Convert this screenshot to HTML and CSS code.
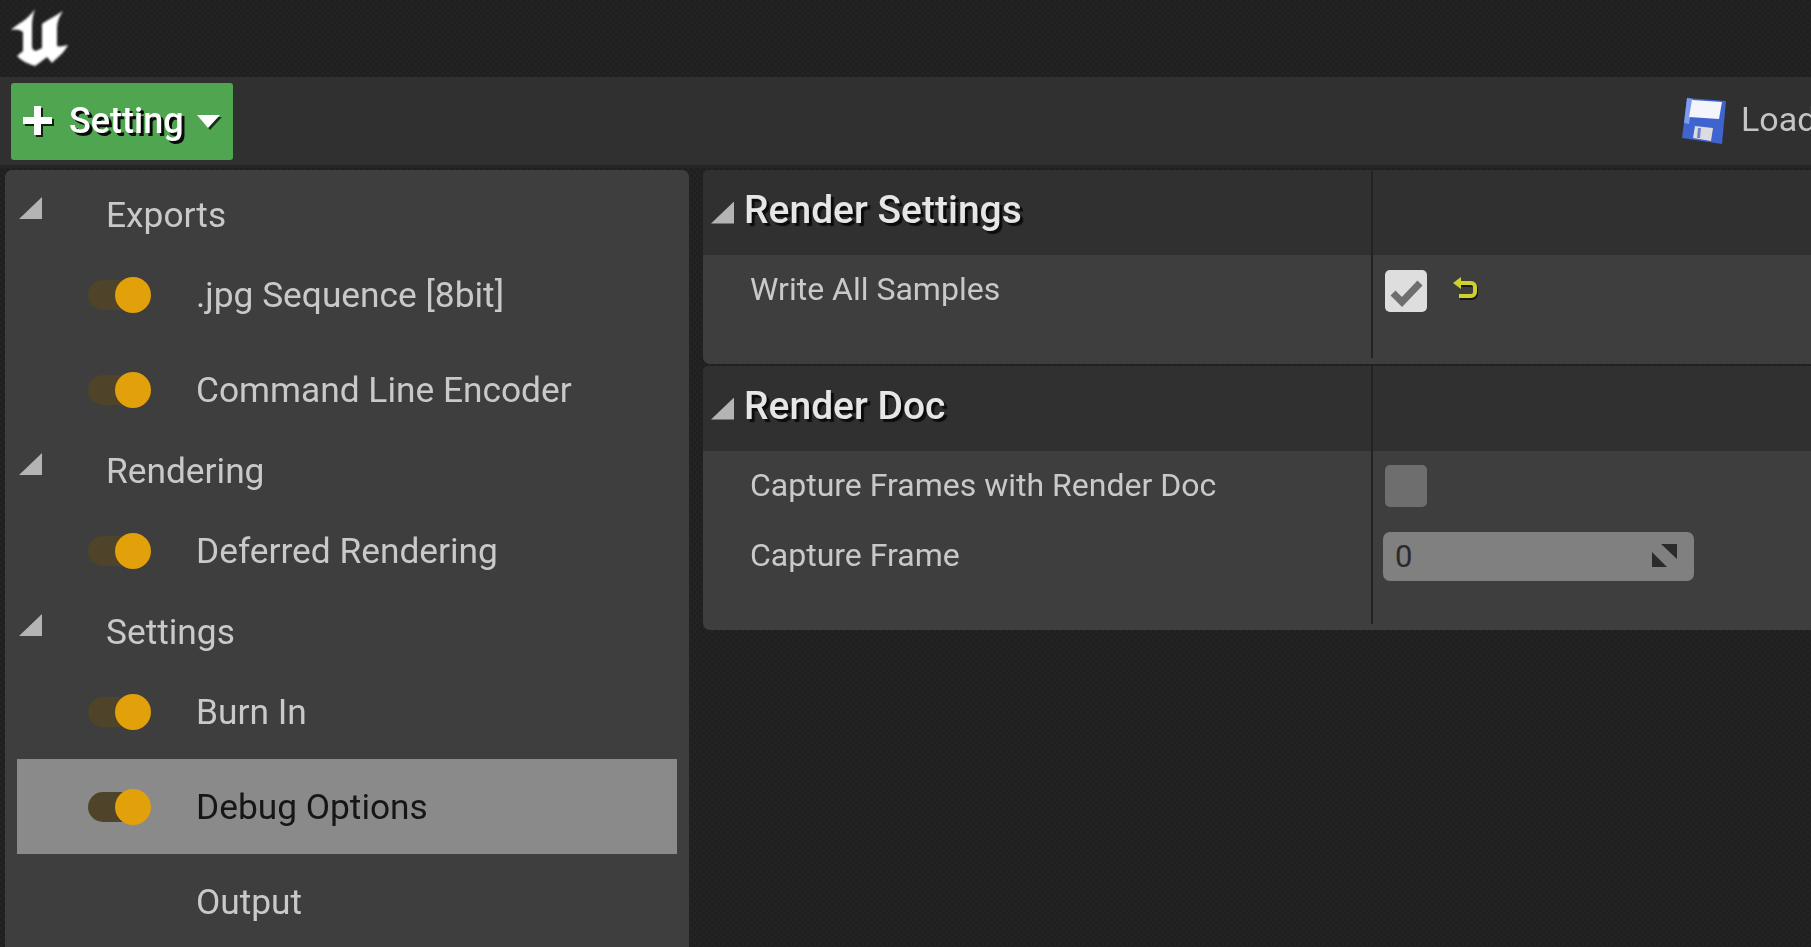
FILE: index.html
```html
<!DOCTYPE html>
<html lang="en">
<head>
<meta charset="utf-8">
<title>Movie Render Queue Settings</title>
<link rel="stylesheet" href="styles.css">
</head>
<body>
<div class="app">
  <header class="topbar">
    <svg class="logo" width="70" height="70" viewBox="0 0 70 70"><path fill="#fff" d="M11 31C17 25 28 21 35 10C33 16 32 21 32 27L32 47C32 51 35 53 38 51L42 49L42 25C47 21 54 18 63 12C59 18 57 23 57 29L57 47C60 48 63 47 68 46C64 54 58 58 52 64L47 58C42 62 38 65 35 67C28 65 22 62 17 57L23 52L23 33C19 30 15 30 11 31Z"/></svg>
  </header>
  <div class="toolbar">
    <button class="add-btn">
      <svg class="plus" width="32" height="32" viewBox="0 0 32 32"><path fill="#000" d="M14 3h7v11h11v7H21v11h-7V21H3v-7h11z" opacity=".8"/><path fill="#fff" d="M12 1h7v11h11v7H19v11h-7V19H1v-7h11z"/></svg>
      <span class="add-label">Setting</span>
      <svg class="caret" width="26" height="16" viewBox="0 0 26 16"><path fill="#000" d="M3 3h23L14 16z" opacity=".7"/><path fill="#fff" d="M1 1h23L12 14z"/></svg>
    </button>
    <div class="load">
      <svg width="46" height="46" viewBox="0 0 46 46"><path fill="#3f63cf" d="M6 0L45 3L41 46L1 40z"/><path fill="#7f9bf0" d="M6 0L12 1L8 26L3 25z"/><path fill="#f4f5fb" d="M11 2L41 4L38 21L8 19z"/><path fill="#dcdce0" d="M14 28L32 30L30 43L12 40z"/><path fill="#6f83c8" d="M17 30L20 30L19 40L16 40z"/></svg>
      <span>Load Preset</span>
    </div>
  </div>
  <div class="content">
    <nav class="sidebar">
      <div class="cat"><i class="tri"></i><span>Exports</span></div>
      <div class="item"><span class="toggle"></span><span>.jpg Sequence [8bit]</span></div>
      <div class="item"><span class="toggle"></span><span>Command Line Encoder</span></div>
      <div class="cat"><i class="tri"></i><span>Rendering</span></div>
      <div class="item"><span class="toggle"></span><span>Deferred Rendering</span></div>
      <div class="cat"><i class="tri"></i><span>Settings</span></div>
      <div class="item"><span class="toggle"></span><span>Burn In</span></div>
      <div class="item selected"><span class="toggle"></span><span>Debug Options</span></div>
      <div class="item no-toggle"><span>Output</span></div>
    </nav>
    <main class="details">
      <section class="section">
        <div class="sec-head"><i class="tri small"></i><h2>Render Settings</h2><b class="sec-div"></b></div>
        <div class="sec-body short">
          <div class="row">
            <label>Write All Samples</label>
            <div class="val first">
              <span class="check on"><svg width="42" height="42" viewBox="0 0 42 42"><path fill="none" stroke="#6e6e6e" stroke-width="7" d="M8 23l9 9L35 13"/></svg></span>
              <svg class="reset" width="26" height="24" viewBox="0 0 26 24"><path fill="none" stroke="#000" stroke-width="4" opacity=".6" d="M9 8h11a4 4 0 0 1 4 4v5a4 4 0 0 1-4 4H8"/><path fill="none" stroke="#cfcf2e" stroke-width="4" d="M8 6h11a4 4 0 0 1 4 4v5a4 4 0 0 1-4 4H7"/><path fill="#cfcf2e" d="M9 0v12L1 6z"/></svg>
            </div>
          </div>
        </div>
      </section>
      <section class="section">
        <div class="sec-head"><i class="tri small"></i><h2>Render Doc</h2><b class="sec-div"></b></div>
        <div class="sec-body">
          <div class="row">
            <label>Capture Frames with Render Doc</label>
            <div class="val"><span class="check"></span></div>
          </div>
          <div class="row">
            <label>Capture Frame</label>
            <div class="val">
              <div class="num"><span>0</span><svg width="26" height="25" viewBox="0 0 26 25"><path fill="#2b2b2b" d="M9 0h16v15zM0 8l15 15H0z"/></svg></div>
            </div>
          </div>
        </div>
      </section>
    </main>
  </div>
</div>
</body>
</html>
```
FILE: styles.css
```css
* { box-sizing: border-box; }
html, body { margin: 0; height: 100%; overflow: hidden; background: #212121; }
body { font-family: Roboto, "Liberation Sans", sans-serif; color: #c9c9c9; }
.app { width: 1811px; height: 947px; display: flex; flex-direction: column; overflow: hidden; background: repeating-conic-gradient(#232323 0 25%, #1f1f1f 0 50%) 0 0 / 6px 6px; }

.topbar { height: 77px; display: flex; align-items: flex-start; flex: none; }
.logo { display: block; filter: blur(1px); margin-top: -1px; }

.toolbar { height: 91px; flex: none; background: #303030; border-bottom: 3px solid #262626; display: flex; align-items: center; padding: 0 0 0 11px; overflow: hidden; }
.add-btn { width: 222px; height: 77px; flex: none; border: 0; border-radius: 3px; background: #4fa550; padding: 0 0 0 11px; display: flex; align-items: center; font: inherit; color: #fff; filter: blur(.5px); }
.plus { margin-right: 15px; flex: none; }
.add-label { font-size: 36px; font-weight: 500; text-shadow: 3px 3px 0 #0c0c0c; width: 124px; text-align: left; flex: none; }
.caret { flex: none; margin-top: 2px; margin-left: 3px; }
.load { margin-left: 1448px; display: flex; align-items: center; gap: 14px; flex: none; font-size: 34px; white-space: nowrap; color: #c4c4c4; }
.load svg { filter: blur(.5px); flex: none; }
.load span { filter: blur(.4px); margin-top: -4px; }

.content { flex: 1; min-height: 0; display: flex; align-items: stretch; gap: 14px; padding: 2px 0 0 5px; }

.sidebar { width: 684px; flex: none; background: #3e3e3e; border-radius: 7px 7px 0 0; padding: 11px 12px 0; font-size: 35.3px; overflow: hidden; }
.cat { height: 66px; display: flex; align-items: center; padding: 2px 0 0 89px; position: relative; }
.tri { display: block; width: 23px; height: 22px; background: #b4b4b4; clip-path: polygon(100% 0, 100% 100%, 0 100%); flex: none; }
.cat .tri { position: absolute; left: 2px; top: 16px; }
.item { height: 95px; display: flex; align-items: center; padding-left: 71px; gap: 45px; white-space: nowrap; }
.item > span:last-child { filter: blur(.4px); }
.cat > span { filter: blur(.4px); }
.no-toggle { padding-left: 179px; }
.selected { background: #8a8a8a; color: #161616; }
.toggle { display: block; width: 63px; height: 36px; flex: none; position: relative; }
.toggle::before { content: ""; position: absolute; left: 0; top: 3px; width: 48px; height: 30px; border-radius: 15px; background: #4f4429; }
.toggle::after { content: ""; position: absolute; right: 0; top: 0; width: 36px; height: 36px; border-radius: 50%; background: #e2a00b; }

.details { flex: 1; min-width: 0; display: flex; flex-direction: column; gap: 2px; }
.section { display: flex; flex-direction: column; }
.sec-head { height: 85px; background: #303030; display: flex; align-items: center; padding-left: 8px; position: relative; border-radius: 5px 0 0 0; }
.sec-head .tri.small { width: 23px; height: 22px; }
.sec-head h2 { margin: 0 0 5px 10px; font-size: 39px; font-weight: 500; color: #e6e6e6; text-shadow: 3px 3px 1px #0c0c0c; filter: blur(.4px); }
.sec-div { position: absolute; left: 668px; top: 0; bottom: 0; width: 2px; background: #232323; }
.sec-body { height: 179px; background: #3e3e3e; border-radius: 0 0 0 7px; position: relative; }
.sec-body.short { height: 109px; }
.sec-body::before { content: ""; position: absolute; left: 668px; top: 0; bottom: 6px; width: 2px; background: #232323; }
.row { height: 70px; display: flex; align-items: center; font-size: 32px; }
.row label { width: 680px; padding: 0 0 3px 47px; flex: none; filter: blur(.4px); }
.val { display: flex; align-items: center; gap: 25px; }
.val.first { padding-top: 2px; }
.check { width: 42px; height: 42px; border-radius: 5px; background: #6e6e6e; display: flex; align-items: center; justify-content: center; margin-left: 2px; flex: none; filter: blur(.4px); }
.check.on { background: #dedede; }
.check svg { display: block; }
.reset { margin-top: -4px; flex: none; filter: blur(.5px); }
.num { width: 311px; height: 49px; border-radius: 7px; background: #808080; color: #2a2a2a; display: flex; align-items: center; justify-content: space-between; padding: 0 16px 0 12px; font-size: 31px; }
```
